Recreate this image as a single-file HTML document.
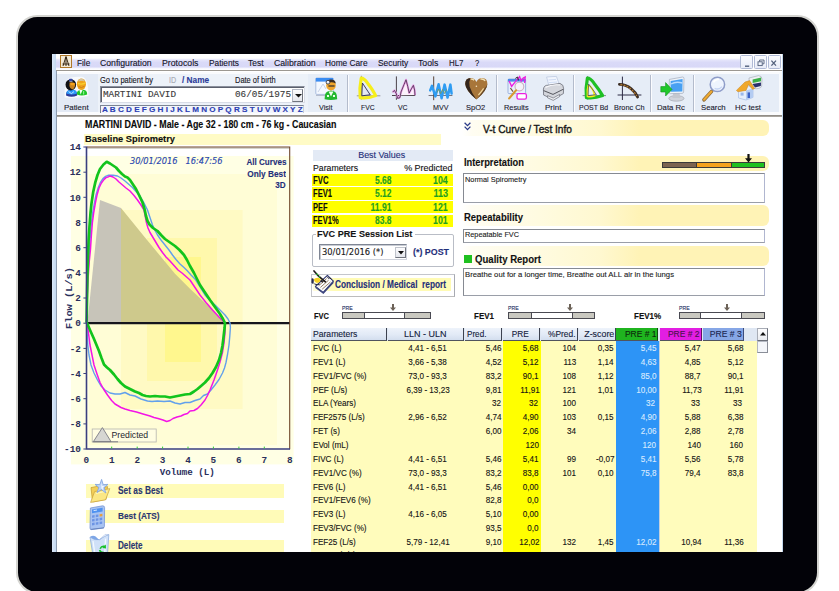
<!DOCTYPE html>
<html lang="en"><head><meta charset="utf-8"><title>Spirometry</title>
<style>
html,body{margin:0;padding:0;background:#fff;}
#page{position:relative;width:839px;height:591px;overflow:hidden;background:#fff;font-family:"Liberation Sans",Arial,sans-serif;}
.b{position:absolute;box-sizing:border-box;}
.t{position:absolute;white-space:pre;line-height:1;display:block;-webkit-text-stroke:.12px currentColor;}
svg{position:absolute;overflow:visible;}
.ax{font-family:'Liberation Mono','Courier New',monospace;font-weight:bold;font-size:9.4px;fill:#2a2f5c;}
.lg{font-family:'Liberation Sans',Arial,sans-serif;font-size:9px;fill:#26262e;}

</style></head>
<body>
<div id="page">
<div class="b" style="left:16.3px;top:15.3px;width:802.8px;height:578.8px;background:#020208;border:2.5px solid #d4d4d0;border-radius:21.5px;"></div>
<div class="b" id="screen" style="left:51.6px;top:53.5px;width:731.4px;height:498.79999999999995px;background:#fff;overflow:hidden;">
<div class="b" style="left:-51.6px;top:-53.5px;width:839px;height:591px;">
<div class="b" style="left:52px;top:53px;width:4px;height:499px;background:linear-gradient(90deg,#dbe8f8,#c3d8f0);"></div>
<div class="b" style="left:55.5px;top:53px;width:1px;height:499px;background:#8e9cb0;"></div>
<div class="b" style="left:781.5px;top:53px;width:1.5px;height:499px;background:#c4d8ee;"></div>
<div class="b" style="left:56px;top:53px;width:684px;height:17.2px;background:linear-gradient(180deg,#ffffff 0%,#ffffff 30%,#e6e6fb 40%,#dadaf8 55%,#d8d8f7 82%,#f6f6fe 90%,#ffffff 100%);"></div>
<div class="b" style="left:56px;top:70.2px;width:726px;height:1.3px;background:#9c9892;"></div>
<div class="b" style="left:56.5px;top:71.5px;width:722.5px;height:41px;background:#e6edf7;"></div>
<div class="b" style="left:779px;top:71.5px;width:3px;height:41px;background:#f8fafd;"></div>
<div class="b" style="left:57px;top:72px;width:41px;height:40px;background:#e3eaf5;"></div>
<div class="b" style="left:98px;top:72px;width:210px;height:40px;background:#edf2f9;"></div>
<div class="b" style="left:56.5px;top:71.5px;width:722.5px;height:2.2px;background:#fafbfd;"></div>
<div class="b" style="left:56.5px;top:112px;width:725px;height:3px;background:#fbfcfe;"></div>
<div class="b" style="left:56.5px;top:114.8px;width:725px;height:1.9px;background:linear-gradient(180deg,#86827c,#b4b0aa);"></div>
<svg style="left:59.5px;top:54.8px" width="12" height="13" viewBox="0 0 12 13"><rect x=".5" y=".5" width="11" height="12" fill="#f4ead6" stroke="#b07828" stroke-width="1"/><path d="M6 1.5 L3 11 M6 1.5 L9 11 M6 3 L6 11 M2.5 9 L9.5 9" stroke="#3a2a18" stroke-width="1" fill="none"/><circle cx="6" cy="3.2" r="1.1" fill="#3a2a18"/></svg>
<span class="t" style="top:59px;font-size:9px;color:#15152a;left:76.8px;transform-origin:0 0;transform:scaleX(0.9094);">File</span>
<span class="t" style="top:59px;font-size:9px;color:#15152a;left:99.6px;transform-origin:0 0;transform:scaleX(0.9636);">Configuration</span>
<span class="t" style="top:59px;font-size:9px;color:#15152a;left:162px;transform-origin:0 0;transform:scaleX(0.9725);">Protocols</span>
<span class="t" style="top:59px;font-size:9px;color:#15152a;left:208.5px;transform-origin:0 0;transform:scaleX(0.9222);">Patients</span>
<span class="t" style="top:59px;font-size:9px;color:#15152a;left:248px;transform-origin:0 0;transform:scaleX(0.9385);">Test</span>
<span class="t" style="top:59px;font-size:9px;color:#15152a;left:273.6px;transform-origin:0 0;transform:scaleX(0.9667);">Calibration</span>
<span class="t" style="top:59px;font-size:9px;color:#15152a;left:325.3px;transform-origin:0 0;transform:scaleX(0.9236);">Home Care</span>
<span class="t" style="top:59px;font-size:9px;color:#15152a;left:377.6px;transform-origin:0 0;transform:scaleX(0.9288);">Security</span>
<span class="t" style="top:59px;font-size:9px;color:#15152a;left:418px;transform-origin:0 0;transform:scaleX(0.9707);">Tools</span>
<span class="t" style="top:59px;font-size:9px;color:#15152a;left:449.3px;transform-origin:0 0;transform:scaleX(0.878);">HL7</span>
<span class="t" style="top:59px;font-size:9px;color:#15152a;left:475.2px;transform-origin:0 0;transform:scaleX(0.8374);">?</span>
<div class="b" style="left:740.4px;top:55.3px;width:12.8px;height:13.4px;background:linear-gradient(180deg,#fbfcff,#e8ecf8);border:1px solid #b0bad6;border-radius:1.5px;"></div>
<div class="b" style="left:754px;top:55.3px;width:12.8px;height:13.4px;background:linear-gradient(180deg,#fbfcff,#e8ecf8);border:1px solid #b0bad6;border-radius:1.5px;"></div>
<div class="b" style="left:767.6px;top:55.3px;width:13.6px;height:13.4px;background:linear-gradient(180deg,#fbfcff,#e8ecf8);border:1px solid #b0bad6;border-radius:1.5px;"></div>
<svg style="left:741px;top:55.5px" width="40" height="14" viewBox="0 0 40 14"><path d="M4 10.2 H8.2" stroke="#52607c" stroke-width="1.4"/><rect x="17" y="5.8" width="4.2" height="3.8" fill="none" stroke="#52607c" stroke-width=".9"/><path d="M18.6 5.6 V4 H23 V7.8 H21.4" fill="none" stroke="#52607c" stroke-width=".9"/><path d="M30.4 4.6 L35 9.6 M35 4.6 L30.4 9.6" stroke="#52607c" stroke-width="1.3"/></svg>
<span class="t" style="top:104px;font-size:8px;color:#1c1c30;left:64.2px;transform-origin:0 0;transform:scaleX(0.9877);">Patient</span>
<span class="t" style="top:75px;font-size:9.5px;color:#141424;left:99.6px;transform-origin:0 0;transform:scaleX(0.7901);">Go to patient by</span>
<span class="t" style="top:75px;font-size:9.5px;color:#a8acb4;left:169px;transform-origin:0 0;transform:scaleX(0.7579);">ID</span>
<span class="t" style="top:75px;font-size:9.5px;color:#2a3c9a;font-weight:bold;left:182px;transform-origin:0 0;transform:scaleX(0.873);">/ Name</span>
<span class="t" style="top:75px;font-size:9.5px;color:#141424;left:234.6px;transform-origin:0 0;transform:scaleX(0.7845);">Date of birth</span>
<div class="b" style="left:100px;top:86px;width:204.6px;height:16.8px;background:#fff;border:1px solid #8a8f9c;border-right-color:#d8dce6;border-bottom-color:#d8dce6;box-shadow:inset 1px 1px 0 #5a5f6c;"></div>
<span class="t" style="top:90px;font-size:9.4px;color:#3a3a3a;font-family:'Liberation Mono', 'Courier New', monospace;left:103px;transform-origin:0 0;transform:scaleX(0.9981);">MARTINI DAVID</span>
<span class="t" style="top:90px;font-size:9.4px;color:#3a3a3a;font-family:'Liberation Mono', 'Courier New', monospace;left:234.6px;transform-origin:0 0;transform:scaleX(0.9953);">06/05/1975</span>
<div class="b" style="left:292.3px;top:89px;width:11px;height:12.6px;background:linear-gradient(180deg,#fdfdfe,#e4e6ec);border:1px solid #b4b8c4;border-right-color:#70747e;border-bottom-color:#70747e;"></div>
<svg style="left:294.6px;top:94px" width="7" height="4" viewBox="0 0 7 4"><path d="M0 0 H7 L3.5 3.6 Z" fill="#111"/></svg>
<div class="b" style="left:100.4px;top:105.3px;width:204px;height:8.2px;background:#f2f5fb;border:1px solid #7c8494;border-bottom:none;border-right-color:#c8ccd8;"></div>
<span class="t" style="top:106px;font-size:8px;color:#2c40b4;font-weight:bold;left:102.2px;transform-origin:0 0;transform:scaleX(1.0141);">A B C D E F G H I J K L M N O P Q R S T U V W X Y Z</span>
<div class="b" style="left:346.6px;top:75px;width:1px;height:36.5px;background:#b4bccc;"></div>
<div class="b" style="left:347.6px;top:75px;width:1px;height:36.5px;background:#fbfcff;"></div>
<div class="b" style="left:496.2px;top:75px;width:1px;height:36.5px;background:#b4bccc;"></div>
<div class="b" style="left:497.2px;top:75px;width:1px;height:36.5px;background:#fbfcff;"></div>
<div class="b" style="left:573.2px;top:75px;width:1px;height:36.5px;background:#b4bccc;"></div>
<div class="b" style="left:574.2px;top:75px;width:1px;height:36.5px;background:#fbfcff;"></div>
<div class="b" style="left:650.4px;top:75px;width:1px;height:36.5px;background:#b4bccc;"></div>
<div class="b" style="left:651.4px;top:75px;width:1px;height:36.5px;background:#fbfcff;"></div>
<div class="b" style="left:692.6px;top:75px;width:1px;height:36.5px;background:#b4bccc;"></div>
<div class="b" style="left:693.6px;top:75px;width:1px;height:36.5px;background:#fbfcff;"></div>
<span class="t" style="top:104px;font-size:8px;color:#1c1c30;left:319.2px;transform-origin:0 0;transform:scaleX(0.8952);">Visit</span>
<span class="t" style="top:104px;font-size:8px;color:#1c1c30;left:360.8px;transform-origin:0 0;transform:scaleX(0.85);">FVC</span>
<span class="t" style="top:104px;font-size:8px;color:#1c1c30;left:398px;transform-origin:0 0;transform:scaleX(0.8629);">VC</span>
<span class="t" style="top:104px;font-size:8px;color:#1c1c30;left:432.8px;transform-origin:0 0;transform:scaleX(0.8879);">MVV</span>
<span class="t" style="top:104px;font-size:8px;color:#1c1c30;left:466.2px;transform-origin:0 0;transform:scaleX(0.938);">SpO2</span>
<span class="t" style="top:104px;font-size:8px;color:#1c1c30;left:504px;transform-origin:0 0;transform:scaleX(0.9218);">Results</span>
<span class="t" style="top:104px;font-size:8px;color:#1c1c30;left:545.2px;transform-origin:0 0;transform:scaleX(0.9968);">Print</span>
<span class="t" style="top:104px;font-size:8px;color:#1c1c30;left:579px;transform-origin:0 0;transform:scaleX(0.8676);">POST Bd</span>
<span class="t" style="top:104px;font-size:8px;color:#1c1c30;left:613.6px;transform-origin:0 0;transform:scaleX(0.9173);">Bronc Ch</span>
<span class="t" style="top:104px;font-size:8px;color:#1c1c30;left:657px;transform-origin:0 0;transform:scaleX(0.9686);">Data Rc</span>
<span class="t" style="top:104px;font-size:8px;color:#1c1c30;left:701px;transform-origin:0 0;transform:scaleX(0.9701);">Search</span>
<span class="t" style="top:104px;font-size:8px;color:#1c1c30;left:735.2px;transform-origin:0 0;transform:scaleX(0.9748);">HC test</span>
<svg style="left:0;top:0" width="839" height="591" viewBox="0 0 839 591">
<!-- patient -->
<g>
<path d="M64.6 97.6 Q64 78 71 77.6 Q76 76.4 82 76.8 Q88.4 77.4 88.4 96 Q76 99 64.6 97.6Z" fill="#fff" opacity=".75"/>
<path d="M66 95.6 Q65.6 90 71.4 89.6 Q77.4 89.8 77.2 95.6 Q71.6 98 66 95.6Z" fill="#2b3c9c"/>
<path d="M66.4 93.4 Q66.4 90 71.4 89.6 Q76.8 89.8 77 93.6 Q71.6 95.6 66.4 93.4Z" fill="#2a98f8"/>
<path d="M68.6 91.6 L71.4 93.6 L74 91.6" stroke="#cfe6ff" stroke-width=".9" fill="none"/>
<path d="M76.8 94.6 Q76.4 89.8 82 89.4 Q87.4 89.6 87.2 94.4 Q82 96.4 76.8 94.6Z" fill="#1fc628"/>
<path d="M79.4 90 L80.6 94.6 L82.6 90 Z" fill="#f4fff4"/>
<path d="M83.6 91 v3.4" stroke="#8ae890" stroke-width="1.2"/>
<ellipse cx="70.8" cy="84.8" rx="5.3" ry="5.6" fill="#121216"/>
<path d="M69.6 82.6 Q73 81.6 75 83.4 Q75.6 87.6 72.6 89.4 Q69.6 88.6 69.4 85.6Z" fill="#c8821e"/>
<path d="M70.4 83 L74.6 83 L74.4 85.2 L70.6 85.2Z" fill="#f4a018"/>
<rect x="69" y="78.8" width="3.6" height="2.4" rx=".8" fill="#3044a4"/>
<path d="M69.4 81.6 L72.6 81.4" stroke="#9aa0b4" stroke-width=".9"/>
<ellipse cx="81.4" cy="84.2" rx="4.6" ry="5.8" fill="#f0a41c"/>
<path d="M78.4 80.8 Q81.4 79 84.6 80.8" stroke="#d8c090" stroke-width="1.6" fill="none"/>
<rect x="80" y="78.6" width="2.6" height="2" fill="#d4c8a8"/>
<path d="M77.8 83.4 Q81.4 84.8 85.2 83.2" stroke="#f8d02c" stroke-width="1.3" fill="none"/>
<path d="M78.4 86.6 Q81.4 88.6 84.6 86.2" stroke="#c87c14" stroke-width=".9" fill="none"/>
</g>
<!-- visit -->
<g>
<rect x="315.8" y="78" width="17.4" height="16.4" rx="1" fill="#f4f8ff" stroke="#9ab0d8" stroke-width=".8"/>
<rect x="315.8" y="78" width="17.4" height="3.6" fill="#3a8cf2"/>
<path d="M318 92 L323 84 L326 89" stroke="#c8d4e8" stroke-width="1" fill="none"/>
<path d="M316 95.4 H330" stroke="#b0b8c8" stroke-width="1"/>
<path d="M324.6 99.2 Q324 91 331 90.6 Q337.6 91 337.2 99.2 Q331 100.6 324.6 99.2Z" fill="#22b82e"/>
<path d="M328.6 91.4 L331 96.4 L333.4 91.4Z" fill="#f0fff0"/>
<path d="M327 95 h2 v2 h-2z M333 95 h2 v2 h-2z" fill="#e8ffe8"/>
<ellipse cx="331" cy="85.4" rx="4.8" ry="5" fill="#f0a62c"/>
<path d="M326.2 83.6 Q327 79.6 331 79.6 Q335.4 79.6 335.8 83.6 Q333 82 331 82.2 Q328.6 82 326.2 83.6Z" fill="#3a2c20"/>
<circle cx="328" cy="82.2" r="1.9" fill="#e8eef8" stroke="#2a2a34" stroke-width=".8"/>
<path d="M328.4 86 H334.6" stroke="#2a2a34" stroke-width="1.2"/>
</g>
<!-- FVC -->
<g fill="none">
<path d="M356.8 95.8 H380.4 M361.4 75.8 V99.6" stroke="#8e8c94" stroke-width=".9"/>
<path d="M361.2 78.2 Q364 78.2 367.8 83.4 Q373.2 90.4 375.6 95.6 Q368 98.8 360.2 97.6 Q359.2 88 361.2 78.2Z" stroke="#f6ee1c" stroke-width="3.2" stroke-linejoin="round"/>
<path d="M362.4 83 L370.2 94.8 L361.8 95.8 Z" stroke="#2a2a50" stroke-width=".9" fill="#e4e8f4"/>
</g>
<!-- VC -->
<g fill="none">
<path d="M392 95.5 H415.2 M396.4 76.4 V99.8" stroke="#3a3038" stroke-width=".9"/>
<path d="M400.6 92.6 L404 84.6 L406 79.8 L407.8 86.6 L409.2 93 L411.4 88.8 L413.4 85.4 L414.6 90 L415 95 L400 95.2 Z" fill="#fbf2fb" stroke="none"/>
<path d="M392.6 92.2 L394.4 90.4 L396.2 93.4 L397.6 97.6 L399.6 97.4 L401 92 L404 84.6 L406 79.8 L407.8 86.6 L409.2 93 L411.4 88.8 L413.4 85.4 L414.6 90 L415 95.2" stroke="#ee9ce6" stroke-width="2.1" stroke-linejoin="round"/>
<path d="M396.6 96 L399.6 98.6" stroke="#ee9ce6" stroke-width="2"/>
<path d="M392.6 92.2 L394.4 90.4 L396.2 93.4 L397.6 98.4 L400 97.6 L401 92 L404 84.6 L406 79.8 L407.8 86.6 L409.2 93 L411.4 88.8 L413.4 85.4 L414.6 90 L415 95.2" stroke="#3c3048" stroke-width=".8" stroke-linejoin="round"/>
</g>
<!-- MVV -->
<g fill="none">
<path d="M428.6 95.5 H452.4" stroke="#6a6870" stroke-width=".9"/>
<path d="M433.7 76.4 V100.2" stroke="#5a4438" stroke-width="1"/>
<path d="M430.2 90.4 L432 85.8 L435.4 96.4 L438.6 84.2 L441.6 98.2 L444.6 84.6 L447.6 97.6 L450.4 84.6 L451.6 93.6" stroke="#2f9cf2" stroke-width="2.5" stroke-linejoin="round" stroke-linecap="round"/>
<path d="M437 92.6 L438.6 89 L440.6 93.6 L442.6 89.4 L444.6 93.6 L446.6 89.6" stroke="#7c9a58" stroke-width=".8"/>
</g>
<!-- SpO2 heart -->
<g>
<path d="M476.4 99.6 Q465.6 90.4 465.2 84 Q465.2 78 470.6 78 Q474.6 78 476.4 82 Q478.2 78 482.2 78 Q487.4 78 487.4 84 Q487.2 90.4 476.4 99.6Z" fill="#a8763a"/>
<path d="M476.4 99.6 Q465.6 90.4 465.2 84 Q465.2 78 470.6 78 Q468.4 82 469.6 86.4 Q471.6 92.6 476.4 99.6Z" fill="#33251c"/>
<path d="M476.4 99.6 Q482 93 484.6 88.6 Q487 86 487.4 84 Q487.2 90.4 476.4 99.6Z" fill="#5c4228"/>
<path d="M470.6 79.2 Q472.6 78.6 474 80.2 M480.4 79.2 Q483.4 78.4 485.2 80.8" stroke="#f4e4b8" stroke-width="1.3" fill="none"/>
<path d="M478.4 95 Q481.6 91.6 483.6 88.4" stroke="#f0d8a0" stroke-width="1.1" fill="none"/>
<circle cx="476.4" cy="86.2" r=".8" fill="#f4e4c0"/>
</g>
<!-- Results -->
<g>
<rect x="508" y="79" width="17.6" height="14.6" rx="1" fill="#e8f0fc" stroke="#8aa4d8" stroke-width=".8"/>
<rect x="508" y="79" width="17.6" height="2.6" fill="#4a8ce8"/>
<path d="M509.2 81 L511.6 86.4 L514.6 82.6 L517.4 79.4 L519.6 76.6 L521.2 81 L523.2 78 L525.2 77 L524.6 83" stroke="#ec20e0" stroke-width="1.4" fill="none"/>
<path d="M515.4 78.4 L517.6 77 L518.4 80.4" stroke="#30202c" stroke-width="1" fill="none"/>
<rect x="517" y="93.6" width="9.4" height="5.6" rx="1.6" fill="#fff" stroke="#ec20e0" stroke-width="1.3"/>
<circle cx="519.4" cy="86.6" r="4.4" fill="#f4f2f8" stroke="#c8b0c0" stroke-width="1.1"/>
<path d="M516 90.4 L509.2 98.4" stroke="#d89a30" stroke-width="2.2" stroke-linecap="round"/>
<path d="M510.4 88 L513 91.6" stroke="#70583c" stroke-width="1.2"/>
</g>
<!-- Print -->
<g>
<path d="M546.6 77 L556.4 76.4 L559.4 84.6 L549 86 Z" fill="#f2f6fe" stroke="#b8c4dc" stroke-width=".7"/>
<path d="M548.4 80 L556 79.4 M549 82.6 L557 82" stroke="#c4d4f0" stroke-width=".8"/>
<path d="M543.4 89 Q544 85 548.4 85.2 L560 83.4 Q563.8 84.6 563.6 88.6 L563.4 93.6 L553 99.4 L543.6 95 Z" fill="#d4d6dc" stroke="#6c6e78" stroke-width=".8"/>
<path d="M543.6 90.6 L553 94.4 L563.4 89.2" stroke="#54565e" stroke-width="1" fill="none"/>
<path d="M547.6 95.6 L553.2 98 L559.6 94.4 L559.6 96.6 L553.2 100.4 L547.6 97.8 Z" fill="#eceef2" stroke="#5c5e68" stroke-width=".6"/>
<path d="M545.4 87.4 Q552 84 560 85" stroke="#f8f8fa" stroke-width="1.2" fill="none"/>
</g>
<!-- POST Bd -->
<g fill="none">
<path d="M582.6 95.6 H606 M587.6 76 V99.6" stroke="#7c7a84" stroke-width=".9"/>
<path d="M587.4 78 Q590.4 78 594 83.2 Q599.6 90.2 602.6 95.6 Q594 98.8 586.4 97.6 Q585.4 88 587.4 78Z" stroke="#1fc024" stroke-width="3.2" stroke-linejoin="round"/>
<path d="M588.4 85.4 Q591 86 593.6 91.4 L594.6 95.6 Q591 97 587.6 96.4 Q587 90 588.4 85.4Z" stroke="#f4ee1c" stroke-width="1.9" stroke-linejoin="round"/>
<path d="M588.6 84 L596.4 94.6 L588 95.6 Z" stroke="#3a3c64" stroke-width=".7"/>
</g>
<!-- Bronc Ch -->
<g fill="none">
<path d="M617.6 95 H641.4 M622.4 76.6 V100" stroke="#2c2a44" stroke-width="1"/>
<path d="M619.4 84.4 Q626 84.6 631 88.6 Q635.4 92 637.6 97" stroke="#3a2c22" stroke-width="2.8" stroke-linecap="round"/>
<path d="M620.4 84.6 Q626 85 630.6 88.8 Q634.6 92 636.8 96" stroke="#b47a30" stroke-width="1.3" stroke-dasharray="2 1.2"/>
</g>
<!-- Data Rc -->
<g>
<ellipse cx="676.4" cy="98.4" rx="7.6" ry="2.8" fill="#d0d4dc" stroke="#9a9ea8" stroke-width=".6"/>
<path d="M673.4 92 H679.4 L680.4 98 H672.4 Z" fill="#c4c8d0"/>
<path d="M669.4 79.4 L682.6 77 Q684 77 684 78.6 L683.6 92 Q683.4 93.4 682 93.4 L670.4 93.6 Q669 93.4 669 92 Z" fill="#eef2f8" stroke="#a4acbc" stroke-width=".7"/>
<path d="M670.6 81 L682.6 79 L682.4 91.4 L670.6 91.8 Z" fill="#48a0f2"/>
<path d="M671 84 Q676 81 682.4 83" stroke="#b8dcff" stroke-width="1.4" fill="none"/>
<path d="M660.8 86.6 H665.6 V82.6 L672 89.4 L665.6 96 V92 H660.8 Z" fill="#1fc82a" stroke="#12901c" stroke-width=".6"/>
</g>
<!-- Search -->
<g>
<path d="M711.6 91.4 L704 99.8" stroke="#8a6a3c" stroke-width="3.6" stroke-linecap="round"/>
<path d="M711.4 91.6 L704.2 99.6" stroke="#eeaa32" stroke-width="2.2" stroke-linecap="round"/>
<circle cx="717.4" cy="84.4" r="7.2" fill="#eef4fe" stroke="#8e9cc8" stroke-width="1.5"/>
<path d="M713.4 82.4 Q715 79.4 719 79.2" stroke="#fff" stroke-width="1.6" fill="none"/>
<path d="M714.6 88.4 Q718.6 90.4 722 86.6" stroke="#c4d4f4" stroke-width="1.4" fill="none"/>
</g>
<!-- HC test -->
<g>
<path d="M749 78 L758.6 75.6 Q762 76 762 79 L761.6 86.6 Q759 89.6 754 88.4 L749.4 84.6 Z" fill="#eef0f4" stroke="#9ea4b0" stroke-width=".6"/>
<path d="M752.6 79.4 L761.2 77.6 L761 81.2 L752.6 83 Z" fill="#3ab048"/>
<path d="M752.4 84 L761 82.4 L760.8 86 L755 87.4 Z" fill="#28306c"/>
<path d="M738.4 90 L738.6 98 L746 100 L753 97.4 L753 88.6 L745.6 84 Z" fill="#e6effc" stroke="#9ab4e0" stroke-width=".6"/>
<path d="M746 100 L753 97.4 L753 88.6 L746 90.4 Z" fill="#b4ccf2"/>
<path d="M736.4 90.4 L745 82 L749.6 80.6 L754.6 88.4 L752.6 89.4 L748.6 84.4 L746 90.4 L738 91.8 Z" fill="#f0a82c" stroke="#c8841c" stroke-width=".5"/>
<rect x="747.6" y="92.4" width="2.4" height="5.6" fill="#3a62c8"/>
<rect x="740.6" y="92.6" width="3" height="3" fill="#9ab8ec"/>
</g>
</svg>

<span class="t" style="top:119px;font-size:10.6px;color:#0a0a0a;font-weight:bold;left:84.5px;transform-origin:0 0;transform:scaleX(0.8373);">MARTINI DAVID - Male - Age 32 - 180 cm - 76 kg - Caucasian</span>
<div class="b" style="left:84px;top:133.6px;width:357px;height:11px;background:#fffbc6;"></div>
<span class="t" style="top:134px;font-size:9.6px;color:#0f0f0f;font-weight:bold;left:84.6px;transform-origin:0 0;transform:scaleX(0.97);">Baseline Spirometry</span>
<svg style="left:0;top:0" width="839" height="591" viewBox="0 0 839 591">
<rect x="71" y="156" width="222.6" height="308.4" fill="#ffffe4"/>
<rect x="89" y="174" width="188" height="271" fill="#fffdd6"/>
<rect x="121" y="210" width="121.6" height="199" fill="#fffac4"/>
<rect x="147" y="238" width="70" height="143" fill="#fff8ac"/>
<rect x="165" y="257" width="36" height="105" fill="#fff78e"/>
<polygon points="87.4,323.0 100.0,200.0 121.0,208.0 121.0,323.0" fill="#c7c4b9"/>
<polygon points="121.0,208.0 145.0,237.5 175.0,273.8 190.0,288.8 210.0,307.5 225.0,322.4 225.0,323.0 121.0,323.0" fill="#cec98c"/>
<path d="M86 323.1 H290" stroke="#15151c" stroke-width="2.3"/>
<polyline points="86.6,322.0 87.2,296.0 88.2,270.0 89.5,249.0 90.4,235.0 91.5,222.5 92.8,212.0 94.3,203.4 96.0,195.0 98.1,188.0 100.4,182.5 102.9,178.6 105.6,176.4 108.6,175.2 113.0,175.3 117.5,176.0 121.0,178.0 125.0,181.0 129.0,184.5 132.5,187.5 136.0,191.5 140.0,196.0 143.5,202.0 147.5,210.0 150.0,217.5 152.5,225.0 155.0,230.5 157.5,235.0 161.0,240.0 165.0,245.0 169.0,250.0 172.5,255.0 176.0,259.5 180.0,264.0 184.0,267.5 187.5,271.0 191.0,275.0 195.0,279.0 200.0,287.0 205.0,295.0 210.0,300.5 215.0,305.0 220.0,310.0 225.0,315.0 228.0,319.0 230.0,323.0 230.0,323.0 230.4,327.5 229.8,336.0 229.0,345.0 227.6,354.0 226.0,362.5 224.5,368.0 222.5,373.0 219.0,379.5 215.0,385.0 211.0,390.0 207.5,394.0 203.5,395.5 200.0,399.0 195.0,400.5 190.0,402.5 185.0,402.5 180.0,404.0 175.0,403.0 170.0,401.0 164.0,401.5 157.5,401.0 152.0,401.5 147.5,401.0 141.0,399.0 135.0,396.0 130.0,395.0 125.0,392.5 120.0,394.0 115.0,394.0 110.0,393.0 105.0,390.0 101.0,386.0 97.5,380.0 94.0,373.0 91.0,365.0 89.0,355.0 87.8,345.0 87.2,334.0 87.0,323.0" fill="none" stroke="#62a0ec" stroke-width="1.4" stroke-linejoin="round"/>
<polyline points="86.6,322.0 87.2,300.0 88.0,280.0 89.2,262.0 90.5,249.0 91.4,235.0 92.4,222.5 93.8,212.0 95.3,203.4 97.0,195.0 99.0,188.0 101.4,183.0 103.9,179.6 106.0,177.6 108.6,176.7 110.0,176.0 113.0,177.0 116.0,179.0 119.0,182.0 122.5,185.0 126.0,188.0 130.0,191.0 134.0,195.5 137.5,200.0 141.0,205.0 144.0,210.0 145.2,216.0 146.4,222.5 148.0,228.0 150.0,232.5 153.0,237.5 156.0,242.5 159.0,247.5 162.5,252.5 166.0,257.0 170.0,261.0 174.0,265.5 178.0,270.0 182.0,273.0 186.0,276.5 190.0,280.0 195.0,287.5 200.0,295.0 206.0,302.5 212.5,310.0 219.0,317.0 225.0,323.0 225.0,323.0 225.0,332.5 224.0,343.0 222.5,352.5 220.0,362.0 217.5,370.0 214.0,380.0 210.0,390.0 207.5,395.5 205.0,400.0 201.0,405.0 197.5,408.5 194.0,410.5 190.0,411.0 187.5,413.5 184.0,414.5 181.0,416.0 177.0,417.0 173.0,418.5 170.0,420.5 166.7,421.5 163.0,420.0 158.0,418.5 154.0,417.5 150.0,416.0 143.0,414.0 136.5,412.0 130.0,410.5 125.0,409.0 121.0,407.5 115.0,404.0 111.6,400.5 107.5,395.0 103.5,389.0 100.0,382.5 97.0,374.0 94.0,365.0 92.0,355.0 90.0,345.0 88.6,334.0 87.2,323.0" fill="none" stroke="#f414e6" stroke-width="1.5" stroke-linejoin="round"/>
<polyline points="86.6,322.0 87.0,300.0 87.4,278.0 87.9,260.0 88.6,240.0 89.5,226.0 90.5,213.0 91.5,203.4 93.2,192.0 95.3,182.4 97.5,175.0 100.0,169.0 103.5,164.5 106.7,161.8 110.0,163.5 113.0,165.5 116.0,167.5 119.0,171.0 122.0,174.0 125.0,176.5 127.5,177.5 130.0,180.0 133.0,184.5 136.0,189.0 139.0,195.0 142.5,202.5 144.5,209.0 146.0,216.0 147.5,221.0 149.5,224.5 153.0,228.0 157.5,231.0 161.0,235.0 165.0,239.0 170.0,242.5 175.0,246.0 179.5,250.0 184.0,255.0 187.0,260.0 190.0,266.0 194.0,273.0 197.0,279.0 200.0,285.0 205.0,292.5 210.0,300.0 215.0,307.0 220.0,314.0 223.0,319.0 225.0,323.0 225.0,323.0 224.6,328.0 224.0,333.0 223.2,340.0 222.4,346.0 221.0,353.0 219.0,360.0 216.0,367.0 212.5,373.0 209.0,378.0 205.0,382.5 201.0,386.0 197.5,389.0 194.0,391.5 190.0,394.0 185.0,394.5 180.0,395.5 175.0,396.5 170.0,397.5 165.0,396.5 160.0,396.5 155.0,396.0 150.0,396.5 146.0,396.0 142.5,395.0 139.0,393.0 135.0,391.5 130.0,389.0 125.0,386.5 121.0,383.0 117.5,379.0 114.0,374.5 110.0,370.0 107.0,367.5 104.0,364.5 101.5,358.0 99.0,351.0 96.5,345.0 94.0,339.0 92.0,334.5 90.0,330.0 88.5,326.5 87.0,323.0" fill="none" stroke="#12c41c" stroke-width="2.7" stroke-linejoin="round" stroke-linecap="round"/>
<path d="M87 148.2 H289" fill="none" stroke="#c4c4ba" stroke-width="1.2"/>
<path d="M86.5 147 H289.7 V449.2" fill="none" stroke="#70482c" stroke-width="1.1"/>
<path d="M86.5 146.6 V449 H290" fill="none" stroke="#3a3f80" stroke-width="1.6"/>
<path d="M83.4 147.0 H86" stroke="#3a3f80" stroke-width="1"/>
<text x="81" y="150.2" text-anchor="end" class="ax">14</text>
<path d="M83.4 172.2 H86" stroke="#3a3f80" stroke-width="1"/>
<text x="81" y="175.4" text-anchor="end" class="ax">12</text>
<path d="M83.4 197.3 H86" stroke="#3a3f80" stroke-width="1"/>
<text x="81" y="200.5" text-anchor="end" class="ax">10</text>
<path d="M83.4 222.5 H86" stroke="#3a3f80" stroke-width="1"/>
<text x="81" y="225.7" text-anchor="end" class="ax">8</text>
<path d="M83.4 247.7 H86" stroke="#3a3f80" stroke-width="1"/>
<text x="81" y="250.9" text-anchor="end" class="ax">6</text>
<path d="M83.4 272.9 H86" stroke="#3a3f80" stroke-width="1"/>
<text x="81" y="276.1" text-anchor="end" class="ax">4</text>
<path d="M83.4 298.0 H86" stroke="#3a3f80" stroke-width="1"/>
<text x="81" y="301.2" text-anchor="end" class="ax">2</text>
<path d="M83.4 323.2 H86" stroke="#3a3f80" stroke-width="1"/>
<text x="81" y="326.4" text-anchor="end" class="ax">0</text>
<path d="M83.4 348.4 H86" stroke="#3a3f80" stroke-width="1"/>
<text x="81" y="351.6" text-anchor="end" class="ax">-2</text>
<path d="M83.4 373.5 H86" stroke="#3a3f80" stroke-width="1"/>
<text x="81" y="376.7" text-anchor="end" class="ax">-4</text>
<path d="M83.4 398.7 H86" stroke="#3a3f80" stroke-width="1"/>
<text x="81" y="401.9" text-anchor="end" class="ax">-6</text>
<path d="M83.4 423.9 H86" stroke="#3a3f80" stroke-width="1"/>
<text x="81" y="427.1" text-anchor="end" class="ax">-8</text>
<path d="M83.4 449.0 H86" stroke="#3a3f80" stroke-width="1"/>
<text x="81" y="452.2" text-anchor="end" class="ax">-10</text>
<text x="86.3" y="463" text-anchor="middle" class="ax">0</text>
<text x="111.7" y="463" text-anchor="middle" class="ax">1</text>
<path d="M111.7 446.6 V448.4" stroke="#2bd02b" stroke-width="1"/>
<text x="137.2" y="463" text-anchor="middle" class="ax">2</text>
<path d="M137.2 446.6 V448.4" stroke="#2bd02b" stroke-width="1"/>
<text x="162.6" y="463" text-anchor="middle" class="ax">3</text>
<path d="M162.6 446.6 V448.4" stroke="#2bd02b" stroke-width="1"/>
<text x="188.0" y="463" text-anchor="middle" class="ax">4</text>
<path d="M188.0 446.6 V448.4" stroke="#2bd02b" stroke-width="1"/>
<text x="213.4" y="463" text-anchor="middle" class="ax">5</text>
<path d="M213.4 446.6 V448.4" stroke="#2bd02b" stroke-width="1"/>
<text x="238.9" y="463" text-anchor="middle" class="ax">6</text>
<path d="M238.9 446.6 V448.4" stroke="#2bd02b" stroke-width="1"/>
<text x="264.3" y="463" text-anchor="middle" class="ax">7</text>
<path d="M264.3 446.6 V448.4" stroke="#2bd02b" stroke-width="1"/>
<text x="289.7" y="463" text-anchor="middle" class="ax">8</text>
<text x="187.2" y="474.6" text-anchor="middle" class="ax" textLength="55" lengthAdjust="spacingAndGlyphs">Volume (L)</text>
<text transform="translate(71.8 298) rotate(-90)" text-anchor="middle" class="ax" textLength="62" lengthAdjust="spacingAndGlyphs">Flow (L/s)</text>
<rect x="92.2" y="429" width="64" height="13" fill="#fffde2" stroke="#b4b4b0" stroke-width=".8"/>
<path d="M93.4 441.6 L102.4 427.6 L111 441.6 Z" fill="#d6d6d2" stroke="#7c7c84" stroke-width=".9"/>
<path d="M92.6 441.8 H118" stroke="#7c7c84" stroke-width="1"/>
<text x="111.6" y="438" class="lg" textLength="36.6" lengthAdjust="spacingAndGlyphs">Predicted</text>
</svg>
<span class="t" style="top:157px;font-size:8.4px;color:#2846b0;font-family:'DejaVu Sans', 'Liberation Sans', sans-serif;font-style:italic;left:130px;transform-origin:0 0;transform:scaleX(0.9864);">30/01/2016   16:47:56</span>
<span class="t" style="top:158px;font-size:9.2px;color:#1f2f7a;font-weight:bold;left:240.55px;transform-origin:100% 0;transform:scaleX(0.88);">All Curves</span>
<span class="t" style="top:170px;font-size:9.2px;color:#1f2f7a;font-weight:bold;left:243.11px;transform-origin:100% 0;transform:scaleX(0.9);">Only Best</span>
<span class="t" style="top:181px;font-size:9.2px;color:#1f2f7a;font-weight:bold;left:274.25px;transform-origin:100% 0;transform:scaleX(0.8851);">3D</span>
<div class="b" style="left:313px;top:149.6px;width:139.6px;height:11px;background:#e3eaf5;"></div>
<span class="t" style="top:151px;font-size:9px;color:#1f2f7a;left:357.91px;transform-origin:50% 0;transform:scaleX(0.9921);">Best Values</span>
<span class="t" style="top:164px;font-size:9px;color:#111;left:313px;transform-origin:0 0;transform:scaleX(0.9671);">Parameters</span>
<span class="t" style="top:164px;font-size:9px;color:#111;left:403.87px;transform-origin:100% 0;transform:scaleX(0.9973);">% Predicted</span>
<div class="b" style="left:312.2px;top:173.9px;width:140.8px;height:12.2px;background:#ffff00;"></div>
<span class="t" style="top:176px;font-size:10.2px;color:#0c0c0c;font-weight:bold;left:312.6px;transform-origin:0 0;transform:scaleX(0.7607);">FVC</span>
<span class="t" style="top:176px;font-size:10px;color:#1fa01f;font-weight:bold;left:371.53px;transform-origin:100% 0;transform:scaleX(0.8424);">5.68</span>
<span class="t" style="top:176px;font-size:10px;color:#1fa01f;font-weight:bold;left:431.31px;transform-origin:100% 0;transform:scaleX(0.8749);">104</span>
<div class="b" style="left:312.2px;top:187.45000000000002px;width:140.8px;height:12.2px;background:#ffff00;"></div>
<span class="t" style="top:189px;font-size:10.2px;color:#0c0c0c;font-weight:bold;left:312.6px;transform-origin:0 0;transform:scaleX(0.7456);">FEV1</span>
<span class="t" style="top:189px;font-size:10px;color:#1fa01f;font-weight:bold;left:371.53px;transform-origin:100% 0;transform:scaleX(0.8424);">5.12</span>
<span class="t" style="top:189px;font-size:10px;color:#1fa01f;font-weight:bold;left:431.86px;transform-origin:100% 0;transform:scaleX(0.9045);">113</span>
<div class="b" style="left:312.2px;top:201.0px;width:140.8px;height:12.2px;background:#ffff00;"></div>
<span class="t" style="top:203px;font-size:10.2px;color:#0c0c0c;font-weight:bold;left:312.6px;transform-origin:0 0;transform:scaleX(0.7363);">PEF</span>
<span class="t" style="top:203px;font-size:10px;color:#1fa01f;font-weight:bold;left:366.52px;transform-origin:100% 0;transform:scaleX(0.8577);">11.91</span>
<span class="t" style="top:203px;font-size:10px;color:#1fa01f;font-weight:bold;left:431.31px;transform-origin:100% 0;transform:scaleX(0.8749);">121</span>
<div class="b" style="left:312.2px;top:214.55px;width:140.8px;height:12.2px;background:#ffff00;"></div>
<span class="t" style="top:216px;font-size:10.2px;color:#0c0c0c;font-weight:bold;left:312.6px;transform-origin:0 0;transform:scaleX(0.741);">FEV1%</span>
<span class="t" style="top:216px;font-size:10px;color:#1fa01f;font-weight:bold;left:371.53px;transform-origin:100% 0;transform:scaleX(0.8424);">83.8</span>
<span class="t" style="top:216px;font-size:10px;color:#1fa01f;font-weight:bold;left:431.31px;transform-origin:100% 0;transform:scaleX(0.8749);">101</span>
<div class="b" style="left:311.6px;top:233.6px;width:142.4px;height:33.6px;border:1px solid #b9bdc6;border-radius:2px;"></div>
<div class="b" style="left:315.6px;top:230px;width:99px;height:8px;background:#fff;"></div>
<span class="t" style="top:229px;font-size:9.6px;color:#141414;font-weight:bold;left:317.4px;transform-origin:0 0;transform:scaleX(0.9468);">FVC PRE Session List</span>
<div class="b" style="left:318.6px;top:244.4px;width:88.8px;height:15.4px;background:#fff;border:1px solid #7f8694;border-right-color:#cfd3dc;border-bottom-color:#cfd3dc;box-shadow:inset 1px 1px 0 #c8ccd4;"></div>
<span class="t" style="top:248px;font-size:8.2px;color:#1a1a1a;font-family:'DejaVu Sans', 'Liberation Sans', sans-serif;left:321.8px;transform-origin:0 0;transform:scaleX(1.0186);">30/01/2016 (*)</span>
<div class="b" style="left:395.4px;top:246.6px;width:10.6px;height:11.4px;background:linear-gradient(180deg,#fdfdfe,#e4e6ec);border:1px solid #c0c4cc;border-right-color:#70747e;border-bottom-color:#70747e;"></div>
<svg style="left:397.8px;top:251px" width="6" height="4" viewBox="0 0 6 4"><path d="M0 0 H6 L3 3.4 Z" fill="#111"/></svg>
<span class="t" style="top:248px;font-size:9px;color:#1f2f7a;font-weight:bold;left:413px;transform-origin:0 0;transform:scaleX(0.9859);">(*) POST</span>
<div class="b" style="left:311px;top:274px;width:143.6px;height:23.2px;background:#fff;border:1px solid #c4c6cc;border-right-color:#a8aab2;border-bottom:1.5px solid #bcbcbc;"></div>
<div class="b" style="left:313px;top:278px;width:138.4px;height:12.9px;background:linear-gradient(90deg,#fffde0 0,#fffbb4 22px);"></div>
<span class="t" style="top:280px;font-size:10.4px;color:#1f2f7a;font-weight:bold;left:335px;transform-origin:0 0;transform:scaleX(0.7978);">Conclusion / Medical  report</span>
<svg style="left:0;top:0" width="839" height="591" viewBox="0 0 839 591">
<g>
<path d="M315.4 286.4 L327.4 275.4 L333.4 281.2 L323.2 292.4 Z" fill="#fbfbfd" stroke="#2c3470" stroke-width="1.1" stroke-linejoin="round"/>
<path d="M323.2 292.4 L333.4 281.2 L333.6 283 L323.4 294 L315.4 288 L315.4 286.4 Z" fill="#39427c"/>
<path d="M318.6 285.8 L326.6 278.6 M320.4 287.4 L328.6 280.2 M322.2 289.2 L330.4 282" stroke="#8a7258" stroke-width=".9"/>
<path d="M327 276.6 L329.4 279 M329.8 277.6 L331.4 279.4" stroke="#1c1c24" stroke-width="1"/>
<path d="M314 271 L318.6 276.2 L325.4 281.8" stroke="#1e1a1c" stroke-width="1.7" fill="none" stroke-linecap="round"/>
<circle cx="317" cy="274.4" r=".8" fill="#20c830"/><circle cx="319.4" cy="276.8" r=".8" fill="#20c830"/>
<path d="M313.8 279.4 Q316.6 276.4 320.2 278.8 Q321 281.6 318.4 282.8 Q315 283.2 313.8 279.4Z" fill="#f8d224"/>
<path d="M311.6 278.6 Q313.4 277.4 313.8 279.8 L313.6 283.4 Q312 284.4 311.4 282.6 Z" fill="#2a2c50"/>
<path d="M314.4 283.6 Q316.4 285.4 319.6 284" stroke="#2a2c50" stroke-width="1.1" fill="none"/>
<path d="M320.6 280.4 L323 282.2" stroke="#1e1a1c" stroke-width="1.3"/>
</g>
</svg>

<span class="t" style="top:312px;font-size:9px;color:#111;font-weight:bold;left:314px;transform-origin:0 0;transform:scaleX(0.8333);">FVC</span>
<div class="b" style="left:342px;top:312.2px;width:88.6px;height:6.4px;background:#fff;border:1px solid #4a4a52;"></div>
<div class="b" style="left:343px;top:313.2px;width:22px;height:4.4px;background:#c9c8c0;border-right:1px solid #4a4a52;"></div>
<div class="b" style="left:404px;top:313.2px;width:25.600000000000023px;height:4.4px;background:#c9c8c0;border-left:1px solid #4a4a52;"></div>
<span class="t" style="top:306px;font-size:5.2px;color:#2a3466;left:342.4px;transform-origin:0 0;transform:scaleX(0.9933);">PRE</span>
<svg style="left:390px;top:304.4px" width="6" height="7" viewBox="0 0 6 7"><path d="M2 0 H4 V3.6 H6 L3 7 L0 3.6 H2 Z" fill="#6c6258"/></svg>
<span class="t" style="top:312px;font-size:9px;color:#111;font-weight:bold;left:474.2px;transform-origin:0 0;transform:scaleX(0.8883);">FEV1</span>
<div class="b" style="left:508px;top:312.2px;width:87px;height:6.4px;background:#fff;border:1px solid #4a4a52;"></div>
<div class="b" style="left:509px;top:313.2px;width:22.600000000000023px;height:4.4px;background:#c9c8c0;border-right:1px solid #4a4a52;"></div>
<div class="b" style="left:572px;top:313.2px;width:22px;height:4.4px;background:#c9c8c0;border-left:1px solid #4a4a52;"></div>
<span class="t" style="top:306px;font-size:5.2px;color:#2a3466;left:508.4px;transform-origin:0 0;transform:scaleX(0.9933);">PRE</span>
<svg style="left:566.6px;top:304.4px" width="6" height="7" viewBox="0 0 6 7"><path d="M2 0 H4 V3.6 H6 L3 7 L0 3.6 H2 Z" fill="#6c6258"/></svg>
<span class="t" style="top:312px;font-size:9px;color:#111;font-weight:bold;left:634.2px;transform-origin:0 0;transform:scaleX(0.8913);">FEV1%</span>
<div class="b" style="left:679px;top:312.2px;width:85.6px;height:6.4px;background:#fff;border:1px solid #4a4a52;"></div>
<div class="b" style="left:680px;top:313.2px;width:21.399999999999977px;height:4.4px;background:#c9c8c0;border-right:1px solid #4a4a52;"></div>
<div class="b" style="left:741px;top:313.2px;width:22.600000000000023px;height:4.4px;background:#c9c8c0;border-left:1px solid #4a4a52;"></div>
<span class="t" style="top:306px;font-size:5.2px;color:#2a3466;left:679.4px;transform-origin:0 0;transform:scaleX(0.9933);">PRE</span>
<svg style="left:724px;top:304.4px" width="6" height="7" viewBox="0 0 6 7"><path d="M2 0 H4 V3.6 H6 L3 7 L0 3.6 H2 Z" fill="#6c6258"/></svg>
<div class="b" style="left:311.4px;top:341px;width:446px;height:211px;background:#fffcbc;"></div>
<div class="b" style="left:503.4px;top:341px;width:37.2px;height:211px;background:#ffff00;"></div>
<div class="b" style="left:615.6px;top:341px;width:43.2px;height:211px;background:#2d94f6;"></div>
<div class="b" style="left:658.8px;top:341px;width:1.6px;height:211px;background:#c4d0dc;"></div>
<div class="b" style="left:311.4px;top:327.6px;width:446px;height:13.199999999999989px;background:#dfe7f3;"></div>
<div class="b" style="left:311.4px;top:327.6px;width:75.20000000000005px;height:13.199999999999989px;background:linear-gradient(180deg,#eef3fb 0%,#e2eaf6 55%,#d3deee 100%);border-right:1.2px solid #3c4250;border-bottom:1px solid #50545e;"></div>
<div class="b" style="left:388px;top:327.6px;width:76px;height:13.199999999999989px;background:linear-gradient(180deg,#eef3fb 0%,#e2eaf6 55%,#d3deee 100%);border-right:1.2px solid #3c4250;border-bottom:1px solid #50545e;"></div>
<div class="b" style="left:465.4px;top:327.6px;width:37.0px;height:13.199999999999989px;background:linear-gradient(180deg,#eef3fb 0%,#e2eaf6 55%,#d3deee 100%);border-right:1.2px solid #3c4250;border-bottom:1px solid #50545e;"></div>
<div class="b" style="left:503.2px;top:327.6px;width:37.19999999999999px;height:13.199999999999989px;background:linear-gradient(180deg,#eef3fb 0%,#e2eaf6 55%,#d3deee 100%);border-right:1.2px solid #3c4250;border-bottom:1px solid #50545e;"></div>
<div class="b" style="left:541.2px;top:327.6px;width:37.19999999999993px;height:13.199999999999989px;background:linear-gradient(180deg,#eef3fb 0%,#e2eaf6 55%,#d3deee 100%);border-right:1.2px solid #3c4250;border-bottom:1px solid #50545e;"></div>
<div class="b" style="left:579.2px;top:327.6px;width:36.39999999999998px;height:13.199999999999989px;background:linear-gradient(180deg,#eef3fb 0%,#e2eaf6 55%,#d3deee 100%);border-right:1.2px solid #3c4250;border-bottom:1px solid #50545e;"></div>
<div class="b" style="left:616px;top:327.6px;width:42.39999999999998px;height:13.199999999999989px;background:#1fb41f;border-right:1.2px solid #0c500c;border-bottom:1px solid #50545e;"></div>
<div class="b" style="left:660px;top:327.6px;width:41.60000000000002px;height:13.199999999999989px;background:#e21ee2;border-right:1.2px solid #601060;border-bottom:1px solid #50545e;"></div>
<div class="b" style="left:702.6px;top:327.6px;width:41.39999999999998px;height:13.199999999999989px;background:#86a6e6;border-right:1.2px solid #3c4c7c;border-bottom:1px solid #50545e;"></div>
<span class="t" style="top:330px;font-size:9px;color:#141c3c;left:313.3px;transform-origin:0 0;transform:scaleX(0.9542);">Parameters</span>
<span class="t" style="top:330px;font-size:9px;color:#141c3c;left:403.74px;transform-origin:50% 0;transform:scaleX(0.9973);">LLN - ULN</span>
<span class="t" style="top:330px;font-size:9px;color:#141c3c;left:467px;transform-origin:0 0;transform:scaleX(0.9017);">Pred.</span>
<span class="t" style="top:330px;font-size:9px;color:#141c3c;left:511.14px;transform-origin:50% 0;transform:scaleX(0.9181);">PRE</span>
<span class="t" style="top:330px;font-size:9px;color:#141c3c;left:546.84px;transform-origin:50% 0;transform:scaleX(0.9283);">%Pred.</span>
<span class="t" style="top:330px;font-size:9px;color:#141c3c;left:583.54px;transform-origin:50% 0;transform:scaleX(0.9831);">Z-score</span>
<span class="t" style="top:330px;font-size:9px;color:#0c2a0c;left:623.63px;transform-origin:50% 0;transform:scaleX(0.9424);">PRE # 1</span>
<span class="t" style="top:330px;font-size:9px;color:#4a124a;left:666.63px;transform-origin:50% 0;transform:scaleX(0.9424);">PRE # 2</span>
<span class="t" style="top:330px;font-size:9px;color:#1c2650;left:709.23px;transform-origin:50% 0;transform:scaleX(0.9543);">PRE # 3</span>
<div class="b" style="left:757.4px;top:327.6px;width:11px;height:13.2px;background:linear-gradient(180deg,#fdfdfe,#e9ebf0);border:1px solid #a8acb6;border-right-color:#6c707a;border-bottom-color:#6c707a;"></div>
<svg style="left:760px;top:332px" width="6" height="4" viewBox="0 0 6 4"><path d="M0 3.6 H6 L3 0 Z" fill="#111"/></svg>
<div class="b" style="left:757.4px;top:341px;width:11px;height:12.4px;background:#f4f6fa;border:1px solid #b4b8c2;border-right-color:#8a8e98;border-bottom-color:#8a8e98;"></div>
<span class="t" style="top:344px;font-size:9px;color:#141414;left:313.1px;transform-origin:0 0;transform:scaleX(.9);">FVC (L)</span>
<span class="t" style="top:344px;font-size:9px;color:#141414;left:406.04px;transform-origin:50% 0;transform:scaleX(.9);">4,41 - 6,51</span>
<span class="t" style="top:344px;font-size:9px;color:#141414;left:484.22px;transform-origin:100% 0;transform:scaleX(.9);">5,46</span>
<span class="t" style="top:344px;font-size:9px;color:#141414;left:521.42px;transform-origin:100% 0;transform:scaleX(.9);">5,68</span>
<span class="t" style="top:344px;font-size:9px;color:#141414;left:561.47px;transform-origin:100% 0;transform:scaleX(.9);">104</span>
<span class="t" style="top:344px;font-size:9px;color:#141414;left:596.22px;transform-origin:100% 0;transform:scaleX(.9);">0,35</span>
<span class="t" style="top:344px;font-size:9px;color:#d8e9ff;left:638.62px;transform-origin:100% 0;transform:scaleX(.9);">5,45</span>
<span class="t" style="top:344px;font-size:9px;color:#141414;left:683.42px;transform-origin:100% 0;transform:scaleX(.9);">5,47</span>
<span class="t" style="top:344px;font-size:9px;color:#141414;left:725.62px;transform-origin:100% 0;transform:scaleX(.9);">5,68</span>
<span class="t" style="top:358px;font-size:9px;color:#141414;left:313.1px;transform-origin:0 0;transform:scaleX(.9);">FEV1 (L)</span>
<span class="t" style="top:358px;font-size:9px;color:#141414;left:406.04px;transform-origin:50% 0;transform:scaleX(.9);">3,66 - 5,38</span>
<span class="t" style="top:358px;font-size:9px;color:#141414;left:484.22px;transform-origin:100% 0;transform:scaleX(.9);">4,52</span>
<span class="t" style="top:358px;font-size:9px;color:#141414;left:521.42px;transform-origin:100% 0;transform:scaleX(.9);">5,12</span>
<span class="t" style="top:358px;font-size:9px;color:#141414;left:562.08px;transform-origin:100% 0;transform:scaleX(.9);">113</span>
<span class="t" style="top:358px;font-size:9px;color:#141414;left:596.22px;transform-origin:100% 0;transform:scaleX(.9);">1,14</span>
<span class="t" style="top:358px;font-size:9px;color:#d8e9ff;left:638.62px;transform-origin:100% 0;transform:scaleX(.9);">4,63</span>
<span class="t" style="top:358px;font-size:9px;color:#141414;left:683.42px;transform-origin:100% 0;transform:scaleX(.9);">4,85</span>
<span class="t" style="top:358px;font-size:9px;color:#141414;left:725.62px;transform-origin:100% 0;transform:scaleX(.9);">5,12</span>
<span class="t" style="top:372px;font-size:9px;color:#141414;left:313.1px;transform-origin:0 0;transform:scaleX(.9);">FEV1/FVC (%)</span>
<span class="t" style="top:372px;font-size:9px;color:#141414;left:406.04px;transform-origin:50% 0;transform:scaleX(.9);">73,0 - 93,3</span>
<span class="t" style="top:372px;font-size:9px;color:#141414;left:484.22px;transform-origin:100% 0;transform:scaleX(.9);">83,2</span>
<span class="t" style="top:372px;font-size:9px;color:#141414;left:521.42px;transform-origin:100% 0;transform:scaleX(.9);">90,1</span>
<span class="t" style="top:372px;font-size:9px;color:#141414;left:561.47px;transform-origin:100% 0;transform:scaleX(.9);">108</span>
<span class="t" style="top:372px;font-size:9px;color:#141414;left:596.22px;transform-origin:100% 0;transform:scaleX(.9);">1,12</span>
<span class="t" style="top:372px;font-size:9px;color:#d8e9ff;left:638.62px;transform-origin:100% 0;transform:scaleX(.9);">85,0</span>
<span class="t" style="top:372px;font-size:9px;color:#141414;left:683.42px;transform-origin:100% 0;transform:scaleX(.9);">88,7</span>
<span class="t" style="top:372px;font-size:9px;color:#141414;left:725.62px;transform-origin:100% 0;transform:scaleX(.9);">90,1</span>
<span class="t" style="top:386px;font-size:9px;color:#141414;left:313.1px;transform-origin:0 0;transform:scaleX(.9);">PEF (L/s)</span>
<span class="t" style="top:386px;font-size:9px;color:#141414;left:403.78px;transform-origin:50% 0;transform:scaleX(.9);">6,39 - 13,23</span>
<span class="t" style="top:386px;font-size:9px;color:#141414;left:484.22px;transform-origin:100% 0;transform:scaleX(.9);">9,81</span>
<span class="t" style="top:386px;font-size:9px;color:#141414;left:517.53px;transform-origin:100% 0;transform:scaleX(.9);">11,91</span>
<span class="t" style="top:386px;font-size:9px;color:#141414;left:561.47px;transform-origin:100% 0;transform:scaleX(.9);">121</span>
<span class="t" style="top:386px;font-size:9px;color:#141414;left:596.22px;transform-origin:100% 0;transform:scaleX(.9);">1,01</span>
<span class="t" style="top:386px;font-size:9px;color:#d8e9ff;left:634.12px;transform-origin:100% 0;transform:scaleX(.9);">10,00</span>
<span class="t" style="top:386px;font-size:9px;color:#141414;left:679.53px;transform-origin:100% 0;transform:scaleX(.9);">11,73</span>
<span class="t" style="top:386px;font-size:9px;color:#141414;left:721.73px;transform-origin:100% 0;transform:scaleX(.9);">11,91</span>
<span class="t" style="top:399px;font-size:9px;color:#141414;left:313.1px;transform-origin:0 0;transform:scaleX(.9);">ELA (Years)</span>
<span class="t" style="top:399px;font-size:9px;color:#141414;left:490.99px;transform-origin:100% 0;transform:scaleX(.9);">32</span>
<span class="t" style="top:399px;font-size:9px;color:#141414;left:528.19px;transform-origin:100% 0;transform:scaleX(.9);">32</span>
<span class="t" style="top:399px;font-size:9px;color:#141414;left:561.47px;transform-origin:100% 0;transform:scaleX(.9);">100</span>
<span class="t" style="top:399px;font-size:9px;color:#d8e9ff;left:645.39px;transform-origin:100% 0;transform:scaleX(.9);">32</span>
<span class="t" style="top:399px;font-size:9px;color:#141414;left:690.19px;transform-origin:100% 0;transform:scaleX(.9);">33</span>
<span class="t" style="top:399px;font-size:9px;color:#141414;left:732.39px;transform-origin:100% 0;transform:scaleX(.9);">33</span>
<span class="t" style="top:413px;font-size:9px;color:#141414;left:313.1px;transform-origin:0 0;transform:scaleX(.9);">FEF2575 (L/s)</span>
<span class="t" style="top:413px;font-size:9px;color:#141414;left:406.04px;transform-origin:50% 0;transform:scaleX(.9);">2,96 - 6,52</span>
<span class="t" style="top:413px;font-size:9px;color:#141414;left:484.22px;transform-origin:100% 0;transform:scaleX(.9);">4,74</span>
<span class="t" style="top:413px;font-size:9px;color:#141414;left:521.42px;transform-origin:100% 0;transform:scaleX(.9);">4,90</span>
<span class="t" style="top:413px;font-size:9px;color:#141414;left:561.47px;transform-origin:100% 0;transform:scaleX(.9);">103</span>
<span class="t" style="top:413px;font-size:9px;color:#141414;left:596.22px;transform-origin:100% 0;transform:scaleX(.9);">0,15</span>
<span class="t" style="top:413px;font-size:9px;color:#d8e9ff;left:638.62px;transform-origin:100% 0;transform:scaleX(.9);">4,90</span>
<span class="t" style="top:413px;font-size:9px;color:#141414;left:683.42px;transform-origin:100% 0;transform:scaleX(.9);">5,88</span>
<span class="t" style="top:413px;font-size:9px;color:#141414;left:725.62px;transform-origin:100% 0;transform:scaleX(.9);">6,38</span>
<span class="t" style="top:427px;font-size:9px;color:#141414;left:313.1px;transform-origin:0 0;transform:scaleX(.9);">FET (s)</span>
<span class="t" style="top:427px;font-size:9px;color:#141414;left:484.22px;transform-origin:100% 0;transform:scaleX(.9);">6,00</span>
<span class="t" style="top:427px;font-size:9px;color:#141414;left:521.42px;transform-origin:100% 0;transform:scaleX(.9);">2,06</span>
<span class="t" style="top:427px;font-size:9px;color:#141414;left:565.99px;transform-origin:100% 0;transform:scaleX(.9);">34</span>
<span class="t" style="top:427px;font-size:9px;color:#d8e9ff;left:638.62px;transform-origin:100% 0;transform:scaleX(.9);">2,06</span>
<span class="t" style="top:427px;font-size:9px;color:#141414;left:683.42px;transform-origin:100% 0;transform:scaleX(.9);">2,88</span>
<span class="t" style="top:427px;font-size:9px;color:#141414;left:725.62px;transform-origin:100% 0;transform:scaleX(.9);">2,78</span>
<span class="t" style="top:441px;font-size:9px;color:#141414;left:313.1px;transform-origin:0 0;transform:scaleX(.9);">EVol (mL)</span>
<span class="t" style="top:441px;font-size:9px;color:#141414;left:523.67px;transform-origin:100% 0;transform:scaleX(.9);">120</span>
<span class="t" style="top:441px;font-size:9px;color:#d8e9ff;left:640.87px;transform-origin:100% 0;transform:scaleX(.9);">120</span>
<span class="t" style="top:441px;font-size:9px;color:#141414;left:685.67px;transform-origin:100% 0;transform:scaleX(.9);">140</span>
<span class="t" style="top:441px;font-size:9px;color:#141414;left:727.87px;transform-origin:100% 0;transform:scaleX(.9);">160</span>
<span class="t" style="top:455px;font-size:9px;color:#141414;left:313.1px;transform-origin:0 0;transform:scaleX(.9);">FIVC (L)</span>
<span class="t" style="top:455px;font-size:9px;color:#141414;left:406.04px;transform-origin:50% 0;transform:scaleX(.9);">4,41 - 6,51</span>
<span class="t" style="top:455px;font-size:9px;color:#141414;left:484.22px;transform-origin:100% 0;transform:scaleX(.9);">5,46</span>
<span class="t" style="top:455px;font-size:9px;color:#141414;left:521.42px;transform-origin:100% 0;transform:scaleX(.9);">5,41</span>
<span class="t" style="top:455px;font-size:9px;color:#141414;left:565.99px;transform-origin:100% 0;transform:scaleX(.9);">99</span>
<span class="t" style="top:455px;font-size:9px;color:#141414;left:593.54px;transform-origin:100% 0;transform:scaleX(.9);">-0,07</span>
<span class="t" style="top:455px;font-size:9px;color:#d8e9ff;left:638.62px;transform-origin:100% 0;transform:scaleX(.9);">5,41</span>
<span class="t" style="top:455px;font-size:9px;color:#141414;left:683.42px;transform-origin:100% 0;transform:scaleX(.9);">5,56</span>
<span class="t" style="top:455px;font-size:9px;color:#141414;left:725.62px;transform-origin:100% 0;transform:scaleX(.9);">5,78</span>
<span class="t" style="top:469px;font-size:9px;color:#141414;left:313.1px;transform-origin:0 0;transform:scaleX(.9);">FEV1/VC (%)</span>
<span class="t" style="top:469px;font-size:9px;color:#141414;left:406.04px;transform-origin:50% 0;transform:scaleX(.9);">73,0 - 93,3</span>
<span class="t" style="top:469px;font-size:9px;color:#141414;left:484.22px;transform-origin:100% 0;transform:scaleX(.9);">83,2</span>
<span class="t" style="top:469px;font-size:9px;color:#141414;left:521.42px;transform-origin:100% 0;transform:scaleX(.9);">83,8</span>
<span class="t" style="top:469px;font-size:9px;color:#141414;left:561.47px;transform-origin:100% 0;transform:scaleX(.9);">101</span>
<span class="t" style="top:469px;font-size:9px;color:#141414;left:596.22px;transform-origin:100% 0;transform:scaleX(.9);">0,10</span>
<span class="t" style="top:469px;font-size:9px;color:#d8e9ff;left:638.62px;transform-origin:100% 0;transform:scaleX(.9);">75,8</span>
<span class="t" style="top:469px;font-size:9px;color:#141414;left:683.42px;transform-origin:100% 0;transform:scaleX(.9);">79,4</span>
<span class="t" style="top:469px;font-size:9px;color:#141414;left:725.62px;transform-origin:100% 0;transform:scaleX(.9);">83,8</span>
<span class="t" style="top:483px;font-size:9px;color:#141414;left:313.1px;transform-origin:0 0;transform:scaleX(.9);">FEV6 (L)</span>
<span class="t" style="top:483px;font-size:9px;color:#141414;left:406.04px;transform-origin:50% 0;transform:scaleX(.9);">4,41 - 6,51</span>
<span class="t" style="top:483px;font-size:9px;color:#141414;left:484.22px;transform-origin:100% 0;transform:scaleX(.9);">5,46</span>
<span class="t" style="top:483px;font-size:9px;color:#141414;left:521.42px;transform-origin:100% 0;transform:scaleX(.9);">0,00</span>
<span class="t" style="top:496px;font-size:9px;color:#141414;left:313.1px;transform-origin:0 0;transform:scaleX(.9);">FEV1/FEV6 (%)</span>
<span class="t" style="top:496px;font-size:9px;color:#141414;left:484.22px;transform-origin:100% 0;transform:scaleX(.9);">82,8</span>
<span class="t" style="top:496px;font-size:9px;color:#141414;left:525.94px;transform-origin:100% 0;transform:scaleX(.9);">0,0</span>
<span class="t" style="top:510px;font-size:9px;color:#141414;left:313.1px;transform-origin:0 0;transform:scaleX(.9);">FEV3 (L)</span>
<span class="t" style="top:510px;font-size:9px;color:#141414;left:406.04px;transform-origin:50% 0;transform:scaleX(.9);">4,16 - 6,05</span>
<span class="t" style="top:510px;font-size:9px;color:#141414;left:484.22px;transform-origin:100% 0;transform:scaleX(.9);">5,10</span>
<span class="t" style="top:510px;font-size:9px;color:#141414;left:521.42px;transform-origin:100% 0;transform:scaleX(.9);">0,00</span>
<span class="t" style="top:524px;font-size:9px;color:#141414;left:313.1px;transform-origin:0 0;transform:scaleX(.9);">FEV3/FVC (%)</span>
<span class="t" style="top:524px;font-size:9px;color:#141414;left:484.22px;transform-origin:100% 0;transform:scaleX(.9);">93,5</span>
<span class="t" style="top:524px;font-size:9px;color:#141414;left:525.94px;transform-origin:100% 0;transform:scaleX(.9);">0,0</span>
<span class="t" style="top:538px;font-size:9px;color:#141414;left:313.1px;transform-origin:0 0;transform:scaleX(.9);">FEF25 (L/s)</span>
<span class="t" style="top:538px;font-size:9px;color:#141414;left:403.78px;transform-origin:50% 0;transform:scaleX(.9);">5,79 - 12,41</span>
<span class="t" style="top:538px;font-size:9px;color:#141414;left:484.22px;transform-origin:100% 0;transform:scaleX(.9);">9,10</span>
<span class="t" style="top:538px;font-size:9px;color:#141414;left:516.92px;transform-origin:100% 0;transform:scaleX(.9);">12,02</span>
<span class="t" style="top:538px;font-size:9px;color:#141414;left:561.47px;transform-origin:100% 0;transform:scaleX(.9);">132</span>
<span class="t" style="top:538px;font-size:9px;color:#141414;left:596.22px;transform-origin:100% 0;transform:scaleX(.9);">1,45</span>
<span class="t" style="top:538px;font-size:9px;color:#d8e9ff;left:634.12px;transform-origin:100% 0;transform:scaleX(.9);">12,02</span>
<span class="t" style="top:538px;font-size:9px;color:#141414;left:678.92px;transform-origin:100% 0;transform:scaleX(.9);">10,94</span>
<span class="t" style="top:538px;font-size:9px;color:#141414;left:721.73px;transform-origin:100% 0;transform:scaleX(.9);">11,36</span>
<span class="t" style="top:551px;font-size:9px;color:#141414;left:313.1px;transform-origin:0 0;transform:scaleX(.9);">FEF50 (L/s)</span>
<span class="t" style="top:551px;font-size:9px;color:#141414;left:406.04px;transform-origin:50% 0;transform:scaleX(.9);">3,47 - 7,78</span>
<span class="t" style="top:551px;font-size:9px;color:#141414;left:484.22px;transform-origin:100% 0;transform:scaleX(.9);">5,63</span>
<span class="t" style="top:551px;font-size:9px;color:#141414;left:521.42px;transform-origin:100% 0;transform:scaleX(.9);">6,20</span>
<span class="t" style="top:551px;font-size:9px;color:#141414;left:562.08px;transform-origin:100% 0;transform:scaleX(.9);">110</span>
<span class="t" style="top:551px;font-size:9px;color:#141414;left:596.22px;transform-origin:100% 0;transform:scaleX(.9);">0,47</span>
<span class="t" style="top:551px;font-size:9px;color:#d8e9ff;left:638.62px;transform-origin:100% 0;transform:scaleX(.9);">6,20</span>
<span class="t" style="top:551px;font-size:9px;color:#141414;left:683.42px;transform-origin:100% 0;transform:scaleX(.9);">6,69</span>
<span class="t" style="top:551px;font-size:9px;color:#141414;left:725.62px;transform-origin:100% 0;transform:scaleX(.9);">6,62</span>
<div class="b" style="left:462px;top:119.6px;width:307.4px;height:16.80000000000001px;background:linear-gradient(90deg,#ffffff 0,#fffdf2 10px,#fffbe0 25%,#fff8d0 45%,#fff3b6 58%,#fff3b6 100%);border-radius:2px 6px 6px 2px;"></div>
<svg style="left:464px;top:122.4px" width="7" height="9" viewBox="0 0 7 9"><path d="M.6 .8 L3.5 3.6 L6.4 .8 M.6 4.6 L3.5 7.6 L6.4 4.6" fill="none" stroke="#2a3a8a" stroke-width="1.3"/></svg>
<span class="t" style="top:123px;font-size:11.6px;color:#161616;left:483px;transform-origin:0 0;transform:scaleX(0.8759);-webkit-text-stroke:.4px #161616;">V-t Curve / Test Info</span>
<div class="b" style="left:462px;top:156px;width:307.4px;height:15px;background:linear-gradient(90deg,#ffffff 0,#fffdf2 10px,#fffbe0 25%,#fff8d0 45%,#fff3b6 58%,#fff3b6 100%);border-radius:2px 6px 6px 2px;"></div>
<span class="t" style="top:158px;font-size:10px;color:#111;font-weight:bold;left:464px;transform-origin:0 0;transform:scaleX(0.9309);">Interpretation</span>
<div class="b" style="left:661.6px;top:161.8px;width:103.2px;height:6.6px;background:#3a3a3a;"></div>
<div class="b" style="left:662.6px;top:162.8px;width:33.6px;height:4.6px;background:#7c6450;"></div>
<div class="b" style="left:697.2px;top:162.8px;width:33.4px;height:4.6px;background:#f4a21c;"></div>
<div class="b" style="left:731.6px;top:162.8px;width:32.2px;height:4.6px;background:#20c020;"></div>
<svg style="left:744.6px;top:154px" width="7" height="8.4" viewBox="0 0 7 8.4"><path d="M2.4 0 H4.6 V4.2 H7 L3.5 8.4 L0 4.2 H2.4 Z" fill="#111"/></svg>
<div class="b" style="left:462.6px;top:173px;width:302.2px;height:29.8px;background:#fff;border:1px solid #868a92;border-right-color:#b0b6d0;border-bottom-color:#9a9ea8;"></div>
<span class="t" style="top:176px;font-size:7.6px;color:#1c1c1c;left:464.6px;transform-origin:0 0;transform:scaleX(0.97);">Normal Spirometry</span>
<div class="b" style="left:462px;top:205.4px;width:307.4px;height:20.599999999999994px;background:linear-gradient(90deg,#ffffff 0,#fffdf2 10px,#fffbe0 25%,#fff8d0 45%,#fff3b6 58%,#fff3b6 100%);border-radius:2px 6px 6px 2px;"></div>
<span class="t" style="top:212px;font-size:11px;color:#111;font-weight:bold;left:464px;transform-origin:0 0;transform:scaleX(0.8617);">Repeatability</span>
<div class="b" style="left:462.6px;top:228.6px;width:302.6px;height:14.2px;background:#fff;border:1px solid #868a92;border-right-color:#b0b6d0;border-bottom-color:#9a9ea8;"></div>
<span class="t" style="top:231px;font-size:7.6px;color:#1c1c1c;left:465px;transform-origin:0 0;transform:scaleX(0.9616);">Repeatable FVC</span>
<div class="b" style="left:462px;top:246px;width:307.4px;height:20.19999999999999px;background:linear-gradient(90deg,#ffffff 0,#fffdf2 10px,#fffbe0 25%,#fff8d0 45%,#fff3b6 58%,#fff3b6 100%);border-radius:2px 6px 6px 2px;"></div>
<div class="b" style="left:464px;top:254.8px;width:8.2px;height:7.8px;background:#1fc01f;"></div>
<span class="t" style="top:254px;font-size:11px;color:#111;font-weight:bold;left:475px;transform-origin:0 0;transform:scaleX(0.8707);">Quality Report</span>
<div class="b" style="left:462.6px;top:267.6px;width:302.6px;height:28.4px;background:#fff;border:1px solid #868a92;border-right-color:#b0b6d0;border-bottom-color:#9a9ea8;"></div>
<span class="t" style="top:271px;font-size:7.6px;color:#1c1c1c;left:465px;transform-origin:0 0;transform:scaleX(1.0138);">Breathe out for a longer time, Breathe out ALL air in the lungs</span>
<div class="b" style="left:85.6px;top:484.4px;width:198px;height:13.8px;background:#fffbb8;"></div>
<span class="t" style="top:485px;font-size:11px;color:#2a3670;font-weight:bold;left:118px;transform-origin:0 0;transform:scaleX(0.7587);">Set as Best</span>
<div class="b" style="left:85.6px;top:509.8px;width:198px;height:13.4px;background:#fffbb8;"></div>
<span class="t" style="top:511px;font-size:9.8px;color:#2a3670;font-weight:bold;left:118px;transform-origin:0 0;transform:scaleX(0.8428);">Best (ATS)</span>
<div class="b" style="left:85.6px;top:540.2px;width:198px;height:12px;background:#fffbb8;"></div>
<span class="t" style="top:541px;font-size:10.2px;color:#2a3670;font-weight:bold;left:118px;transform-origin:0 0;transform:scaleX(0.798);">Delete</span>
<svg style="left:0;top:0" width="839" height="591" viewBox="0 0 839 591">
<!-- folder + star -->
<g>
<path d="M91 487.6 L97 486.4 L99 488 L107.6 486.6 L106 499.4 L92.6 502 Z" fill="#f2cf58" stroke="#c49a2c" stroke-width=".7"/>
<path d="M94.6 491.6 L109.8 488.6 L105.6 499.8 L90.6 502.4 Z" fill="#fbe784" stroke="#caa23a" stroke-width=".7"/>
<path d="M96 493.4 L107.4 491" stroke="#fff6c0" stroke-width="1.2"/>
<path d="M101.6 479.4 L103.2 484.6 L108 484.4 L104.2 487.6 L105.8 493 L101.4 489.6 L97 492.6 L98.8 487.4 L95 484.4 L99.8 484.6 Z" fill="#bcd4f6" stroke="#7ea2e0" stroke-width=".8"/>
<path d="M101.4 482.6 L102.2 486 L104.6 486.2 L102.6 487.8 L103.2 490 L101.4 488.4 Z" fill="#f4f8ff"/>
</g>
<!-- calculator -->
<g>
<path d="M90.4 508 L102.6 505.8 Q104.6 505.8 104.6 507.6 L104.4 526.6 Q104.2 528 102.6 528.2 L91.6 529.6 Q90 529.6 90 528 Z" fill="#a9c4f2" stroke="#7696d6" stroke-width=".8"/>
<path d="M92 509.6 L102.6 507.8 L102.6 511.6 L92 513.2 Z" fill="#4f92f0"/>
<path d="M93.6 510.6 L97 510" stroke="#d8e8ff" stroke-width="1"/>
<g fill="#6c94e4">
<path d="M92 515.4 l2.6 -.4 v2.4 l-2.6 .4z M95.8 514.8 l2.6 -.4 v2.4 l-2.6 .4z M92 519.2 l2.6 -.4 v2.4 l-2.6 .4z M95.8 518.6 l2.6 -.4 v2.4 l-2.6 .4z M99.6 518 l2.6 -.4 v2.4 l-2.6 .4z M92 523 l2.6 -.4 v2.4 l-2.6 .4z M95.8 522.4 l2.6 -.4 v2.4 l-2.6 .4z M99.6 521.8 l2.6 -.4 v2.4 l-2.6 .4z"/>
</g>
<path d="M99.6 514.2 l2.8 -.4 v2.4 l-2.8 .4z" fill="#e8a03c"/>
<path d="M90.6 529.4 L104 527.8" stroke="#5c78b4" stroke-width=".8"/>
</g>
<!-- recycle bin -->
<g>
<path d="M90 537 Q95 541 99.6 539.6 Q104.6 535.6 108.8 534.6 L107.6 553 L92.6 553 Z" fill="#cfe0f8" stroke="#8eaede" stroke-width=".8"/>
<path d="M90 537 Q92.6 534.6 95.6 536.4 Q98 539 99.6 539.6 Q95 541 90 537Z" fill="#7ea6e6"/>
<path d="M99.6 539.6 Q103 536.6 105 534.4 L108.8 534.6 Q104.6 535.6 99.6 539.6Z" fill="#f4f8ff" stroke="#9ab4e0" stroke-width=".5"/>
<path d="M93 541 L94.6 552 M105.6 538.6 L104.8 552" stroke="#f2f8ff" stroke-width="1.3"/>
<path d="M99.4 548.4 Q101 544.8 104.6 545.6 L105.8 544.4 L106 548.6 L102.2 548 L103.4 547 Q101.6 546.8 101 549 Z" fill="#18c02a"/>
<path d="M99.6 550 Q100.6 553 104 552.6" stroke="#18c02a" stroke-width="1.6" fill="none"/>
</g>
</svg>

</div></div>
</div>
</body></html>
